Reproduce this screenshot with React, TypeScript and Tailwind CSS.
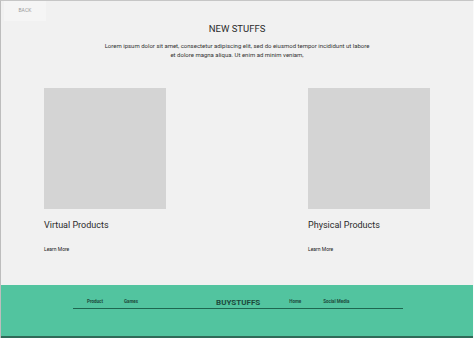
export default function App() {
    return (
        <div className="w-[474px] h-[338px] overflow-hidden flex flex-col bg-[#f1f1f1] border-t border-t-[#c6c6c6] border-l border-l-[#bdbdbd] border-r border-r-[#fafafa] font-['Roboto',sans-serif]">
            <div className="flex-1 flex flex-col">
                <div className="flex">
                    <button className="ml-[3px] w-[42px] h-[20px] bg-[#f5f5f5] text-[5px] tracking-wide text-[#9a9a9a]">BACK</button>
                </div>
                <div className="flex flex-col items-center">
                    <h1 className="mt-[2px] text-[9.5px] leading-[12px] text-[#2b2b2b]">NEW STUFFS</h1>
                    <p className="mt-[6px] w-[270px] text-center text-[6px] leading-[9px] text-[#333]">
                        Lorem ipsum dolor sit amet, consectetur adipiscing elit, sed do eiusmod tempor incididunt ut labore et dolore magna aliqua. Ut enim ad minim veniam,
                    </p>
                </div>
                <div className="mt-[29px] flex justify-between pl-[43px] pr-[43px]">
                    <div className="flex flex-col">
                        <div className="w-[122px] h-[121px] bg-[#d4d4d4]" />
                        <h2 className="mt-[10px] text-[9px] leading-[12px] text-[#2a2a2a]">Virtual Products</h2>
                        <a className="mt-[15px] text-[5px] leading-[6px] text-[#222]">Learn More</a>
                    </div>
                    <div className="flex flex-col">
                        <div className="w-[122px] h-[121px] bg-[#d4d4d4]" />
                        <h2 className="mt-[10px] text-[9px] leading-[12px] text-[#2a2a2a]">Physical Products</h2>
                        <a className="mt-[15px] text-[5px] leading-[6px] text-[#222]">Learn More</a>
                    </div>
                </div>
            </div>
            <footer className="h-[53px] bg-[#52c49f] border-b-2 border-b-[#2f6b58] pt-[12px]">
                <nav className="ml-[72px] w-[330px] h-[12px] border-b border-b-[#1f6650] flex items-end text-[#1d4a3c]">
                    <span className="ml-[14px] mb-[2px] text-[4.5px] font-bold">Product</span>
                    <span className="ml-[21px] mb-[2px] text-[4.5px] font-bold">Games</span>
                    <span className="ml-[78px] text-[8px] leading-[10px] font-bold">BUYSTUFFS</span>
                    <span className="ml-[29px] mb-[2px] text-[4.5px] font-bold">Home</span>
                    <span className="ml-[22px] mb-[2px] text-[4.5px] font-bold">Social Media</span>
                </nav>
            </footer>
        </div>
    )
}
